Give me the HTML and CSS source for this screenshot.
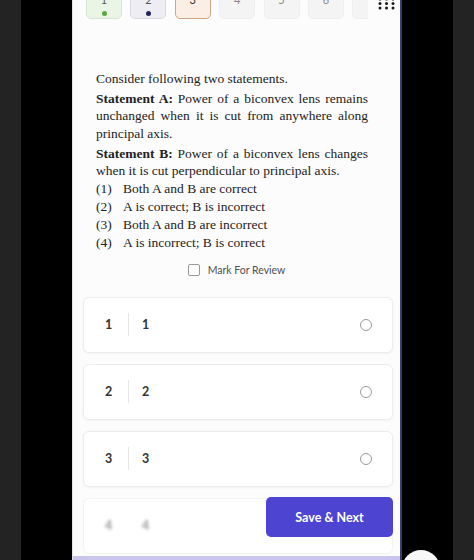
FILE: index.html
```html
<!DOCTYPE html>
<html lang="en">
<head>
    <meta charset="UTF-8">
    <meta name="viewport" content="width=device-width, initial-scale=1.0">
    <title>Question 3</title>
    <link rel="stylesheet" href="styles.css">
</head>
<body>
    <div class="edge"></div>
    <div class="bezel"></div>

    <main class="screen">
        <!-- Question palette -->
        <div class="palette">
            <div class="chips">
                <div class="chip answered"><span>1</span><i></i></div>
                <div class="chip marked"><span>2</span><i></i></div>
                <div class="chip current"><span>3</span></div>
                <div class="chip"><span>4</span></div>
                <div class="chip"><span>5</span></div>
                <div class="chip"><span>6</span></div>
                <div class="chip"><span>7</span></div>
            </div>
            <svg class="grid-icon" width="18" height="14" viewBox="0 0 18 14">
                <circle cx="2" cy="1" r="1.5"/><circle cx="8.5" cy="1" r="1.5"/><circle cx="15" cy="1" r="1.5"/>
                <circle cx="2" cy="5.5" r="1.5"/><circle cx="8.5" cy="5.5" r="1.5"/><circle cx="15" cy="5.5" r="1.5"/>
                <circle cx="2" cy="10" r="1.5"/><circle cx="8.5" cy="10" r="1.5"/><circle cx="15" cy="10" r="1.5"/>
            </svg>
        </div>

        <!-- Question -->
        <section class="question">
            <p>Consider following two statements.</p>
            <p><b>Statement A:</b> Power of a biconvex lens remains unchanged when it is cut from anywhere along principal axis.</p>
            <p><b>Statement B:</b> Power of a biconvex lens changes when it is cut perpendicular to principal axis.</p>
            <ul class="choices">
                <li><span>(1)</span>Both A and B are correct</li>
                <li><span>(2)</span>A is correct; B is incorrect</li>
                <li><span>(3)</span>Both A and B are incorrect</li>
                <li><span>(4)</span>A is incorrect; B is correct</li>
            </ul>
        </section>

        <label class="review"><span class="box"></span>Mark For Review</label>

        <!-- Answer options -->
        <div class="options">
            <div class="option"><span class="num">1</span><span class="sep"></span><span class="val">1</span><span class="radio"></span></div>
            <div class="option"><span class="num">2</span><span class="sep"></span><span class="val">2</span><span class="radio"></span></div>
            <div class="option"><span class="num">3</span><span class="sep"></span><span class="val">3</span><span class="radio"></span></div>
            <div class="option faded"><span class="num">4</span><span class="sep"></span><span class="val">4</span></div>
        </div>

        <button class="save">Save &amp; Next</button>
        <div class="home-bar"></div>
    </main>

    <div class="bezel"></div>
    <div class="edge"></div>
    <div class="touch"></div>
</body>
</html>
```
FILE: styles.css
```css
body {
    margin: 0;
    height: 560px;
    overflow: hidden;
    display: flex;
    background-color: #000;
    font-family: "Lato", "Noto Sans", sans-serif;
    position: relative;
}
.edge {
    width: 21px;
    background-color: #232323;
}
.bezel {
    width: 51px;
    background-color: #000;
}

/* Phone screen */
.screen {
    width: 330px;
    height: 560px;
    box-sizing: border-box;
    background-color: #fcfcfc;
    border-left: 1px solid #e4e4e4;
    border-right: 2px solid #3d3a7a;
    display: flex;
    flex-direction: column;
    position: relative;
    overflow: hidden;
}

/* Palette */
.palette {
    display: flex;
    align-items: flex-start;
    margin-top: -19px;
    padding-left: 13px;
}
.chips {
    display: flex;
    gap: 8.4px;
    width: 282px;
    overflow: hidden;
}
.chip {
    flex: 0 0 36px;
    height: 38px;
    box-sizing: border-box;
    padding-top: 12px;
    border: 1px solid #efefef;
    border-radius: 5px;
    background-color: #f4f4f4;
    display: flex;
    flex-direction: column;
    align-items: center;
    font-size: 11px;
    line-height: 12px;
    color: #8a8a8a;
}
.chip i {
    width: 5px;
    height: 5px;
    margin-top: 5px;
    border-radius: 50%;
}
.chip.answered {
    background-color: #eaf5e6;
    border-color: #d5e5d0;
    color: #555;
}
.chip.answered i {
    background-color: #5aa845;
}
.chip.marked {
    background-color: #ededf3;
    border-color: #d9d9e4;
    color: #555;
}
.chip.marked i {
    background-color: #23235e;
}
.chip.current {
    background-color: #fbeee4;
    border-color: #cfa585;
    color: #333;
}
.grid-icon {
    margin: 17px 0 0 10px;
    fill: #1c1c1c;
}

/* Question text */
.question {
    margin-top: 51px;
    padding: 0 32px 0 23px;
    font-family: "Liberation Serif", "Times New Roman", serif;
    font-size: 13.5px;
    line-height: 17.2px;
    color: #232323;
}
.question p {
    margin: 0 0 3px;
    text-align: justify;
}
.question p:last-of-type {
    margin-bottom: 0.5px;
}
.choices {
    list-style: none;
    margin: 0;
    padding: 0;
    line-height: 18px;
}
.choices span {
    display: inline-block;
    width: 27px;
}

/* Mark for review */
.review {
    display: flex;
    align-items: center;
    justify-content: center;
    gap: 8px;
    margin-top: 12px;
    font-size: 10.5px;
    color: #505050;
    height: 12px;
}
.review .box {
    width: 12px;
    height: 12px;
    box-sizing: border-box;
    border: 1.3px solid #9a9a9a;
    border-radius: 2px;
}

/* Options */
.options {
    display: flex;
    flex-direction: column;
    gap: 11px;
    margin: 21px 7px 0 10px;
}
.option {
    height: 56px;
    box-sizing: border-box;
    display: flex;
    align-items: center;
    padding: 0 20px 0 21px;
    background-color: #fff;
    border: 1px solid #ececec;
    border-radius: 6px;
    box-shadow: 0 1px 3px rgba(0, 0, 0, 0.04);
    font-size: 12.5px;
    font-weight: 700;
    color: #333;
}
.option .num {
    width: 7px;
}
.option .sep {
    width: 1px;
    height: 23px;
    margin-left: 16px;
    background-color: #e6e6e6;
}
.option .val {
    margin-left: 13px;
}
.option .radio {
    margin-left: auto;
    width: 12px;
    height: 12px;
    box-sizing: border-box;
    border: 1.4px solid #9a9a9a;
    border-radius: 50%;
}
.option.faded {
    border-color: #f3f3f3;
    box-shadow: none;
}
.option.faded .num,
.option.faded .val {
    color: #9a9a9a;
    filter: blur(1.5px);
}
.option.faded .sep {
    background-color: transparent;
}

/* Save button, fixed over the list */
.save {
    position: absolute;
    right: 7px;
    bottom: 23px;
    width: 127px;
    height: 40px;
    border: none;
    border-radius: 5px;
    background-color: #4d45d1;
    color: #fff;
    font-family: "Lato", "Noto Sans", sans-serif;
    font-size: 12.5px;
    font-weight: 700;
}

.home-bar {
    margin-top: auto;
    height: 4px;
    background-color: #c9c5ee;
}

/* Finger / touch mark at the bottom */
.touch {
    position: absolute;
    left: 402px;
    top: 550px;
    width: 38px;
    height: 38px;
    border-radius: 50%;
    background-color: #f7f7f7;
}
```
